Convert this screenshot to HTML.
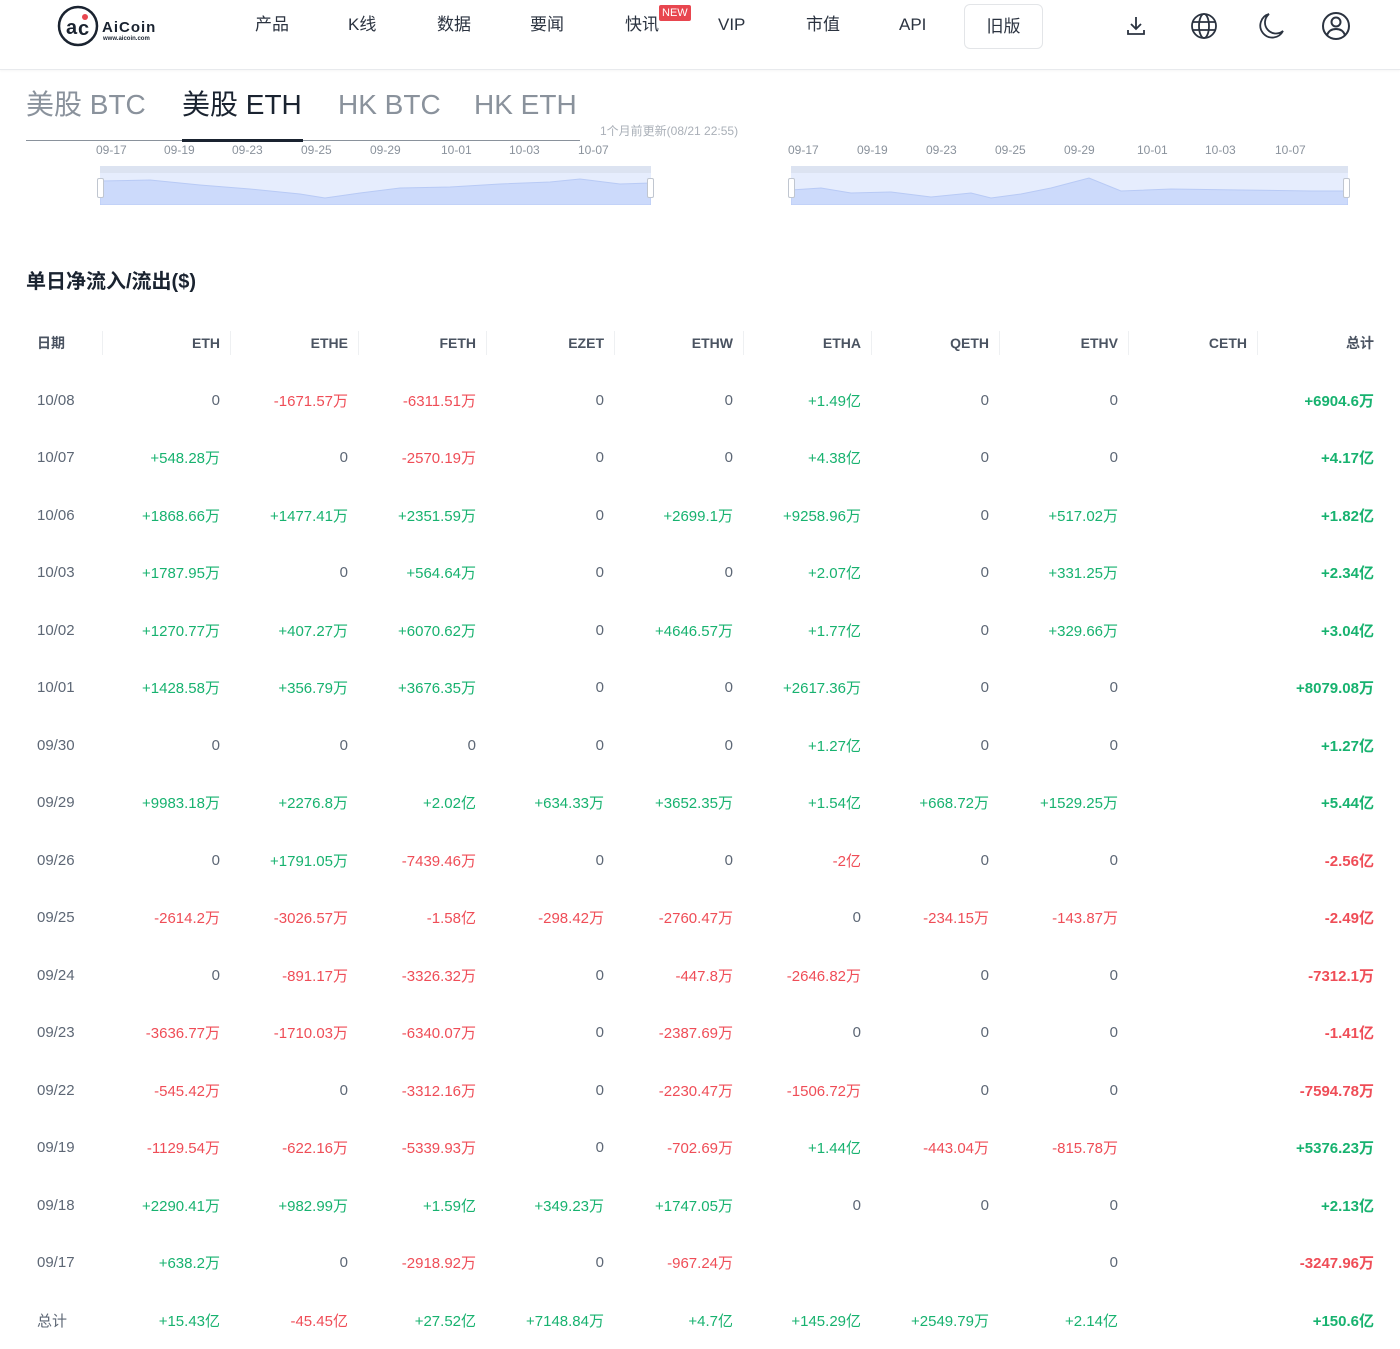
<!DOCTYPE html>
<html><head><meta charset="utf-8">
<style>
*{margin:0;padding:0;box-sizing:border-box}
body{width:1400px;height:1335px;overflow:hidden;background:#fff;font-family:"Liberation Sans","Noto Sans CJK SC",sans-serif;color:#5d6775;position:relative}
.nav{position:absolute;left:0;top:0;width:1400px;height:70px;border-bottom:1px solid #e8eaed;box-shadow:0 1px 2px rgba(0,0,0,0.04)}
.nav .it{position:absolute;top:12px;height:26px;line-height:26px;font-size:17px;color:#2b3340}
.new{position:absolute;left:659px;top:5px;background:#e8464f;color:#fff;font-size:11px;padding:1px 3px;border-radius:2px;line-height:14px}
.old{position:absolute;left:964px;top:4px;width:79px;height:45px;border:1px solid #e3e5e8;border-radius:6px;font-size:17px;color:#2b3340;text-align:center;line-height:43px}
.tab{position:absolute;top:85px;height:40px;line-height:40px;font-size:28px;color:#8a929c}
.tl{position:absolute;left:26px;top:140px;width:554px;height:1px;background:#8a929c}
.ta{position:absolute;left:182px;top:139px;width:121px;height:3px;background:#1a2330}
.dl{position:absolute;top:143px;font-size:12px;color:#8a929c}
.upd{position:absolute;left:600px;top:122px;font-size:12px;color:#aab0b8}
.ch{position:absolute;top:166px;height:39px;background:#e6edfd;border-top:7px solid #dce3f1}
.h{position:absolute;top:178px;width:7px;height:20px;background:#fff;border:1px solid #c0c6d0;border-radius:2px}
h2{position:absolute;left:26px;top:265px;font-size:20px;color:#1a2330;font-weight:bold}
table{position:absolute;left:26px;top:314px;border-collapse:collapse;table-layout:fixed;width:1358px}
td,th{height:57.5px;text-align:right;padding-right:10px;font-size:15px;font-weight:normal;white-space:nowrap}
th{font-weight:bold;font-size:14px;color:#4a5361;position:relative}
th:not(:first-child)::before{content:"";position:absolute;left:0;top:17px;height:24px;border-left:1px solid #eef0f2}
td:first-child,th:first-child{text-align:left;padding-left:11px;padding-right:0}
.g{color:#17b26f}.r{color:#ef4d57}
td:last-child{font-weight:bold}
</style></head><body>
<div class="nav">
<svg style="position:absolute;left:57px;top:5px" width="110" height="44" viewBox="0 0 110 44">
<circle cx="21" cy="21" r="19" fill="none" stroke="#1a2330" stroke-width="2.5"/>
<text x="9" y="29" font-family="Liberation Sans" font-weight="bold" font-size="20" fill="#1a2330">a</text>
<text x="21" y="30" font-family="Liberation Sans" font-weight="bold" font-size="20" fill="#1a2330">c</text>
<circle cx="28" cy="12" r="3" fill="#e8464f"/>
<text x="45" y="27" font-family="Liberation Sans" font-weight="bold" font-size="15" fill="#1a2330" letter-spacing="1">AiCoin</text>
<text x="46" y="35" font-family="Liberation Sans" font-weight="bold" font-size="6" fill="#1a2330">www.aicoin.com</text>
</svg>
<span class="it" style="left:255px">产品</span>
<span class="it" style="left:348px">K线</span>
<span class="it" style="left:437px">数据</span>
<span class="it" style="left:530px">要闻</span>
<span class="it" style="left:625px">快讯</span>
<span class="new">NEW</span>
<span class="it" style="left:718px">VIP</span>
<span class="it" style="left:806px">市值</span>
<span class="it" style="left:899px">API</span>
<div class="old">旧版</div>
<svg style="position:absolute;left:1124px;top:14px" width="24" height="24" viewBox="0 0 24 24" fill="none" stroke="#2b3340" stroke-width="1.8"><path d="M12 3v12M7 10l5 5 5-5M4 16v4h16v-4"/></svg>
<svg style="position:absolute;left:1189px;top:11px" width="30" height="30" viewBox="0 0 30 30" fill="none" stroke="#2b3340" stroke-width="1.8"><circle cx="15" cy="15" r="12"/><ellipse cx="15" cy="15" rx="5" ry="12"/><path d="M3 11h24M3 19h24"/></svg>
<svg style="position:absolute;left:1256px;top:11px" width="30" height="30" viewBox="0 0 30 30" fill="none" stroke="#2b3340" stroke-width="1.8"><path d="M13 3a12 12 0 1 0 14 17A11 11 0 0 1 13 3z"/></svg>
<svg style="position:absolute;left:1320px;top:10px" width="32" height="32" viewBox="0 0 32 32" fill="none" stroke="#2b3340" stroke-width="2"><circle cx="16" cy="16" r="13"/><circle cx="16" cy="12" r="4.5"/><path d="M7 25c2-5 6-6 9-6s7 1 9 6"/></svg>
</div>

<span class="tab" style="left:26px">美股 BTC</span>
<span class="tab" style="left:182px;color:#1a2330">美股 ETH</span>
<span class="tab" style="left:338px">HK BTC</span>
<span class="tab" style="left:474px">HK ETH</span>
<div class="tl"></div><div class="ta"></div>
<span class="upd">1个月前更新(08/21 22:55)</span>

<span class="dl" style="left:96px">09-17</span><span class="dl" style="left:164px">09-19</span><span class="dl" style="left:232px">09-23</span><span class="dl" style="left:301px">09-25</span><span class="dl" style="left:370px">09-29</span><span class="dl" style="left:441px">10-01</span><span class="dl" style="left:509px">10-03</span><span class="dl" style="left:578px">10-07</span>
<div class="ch" style="left:100px;width:551px"><svg width="551" height="32" style="position:absolute;left:0;top:0" preserveAspectRatio="none" viewBox="0 0 551 32"><path d="M0 8L50 7 100 12 150 16 200 21 225 25 260 20 300 15 350 14 400 11 450 9 480 6 520 11 551 10V32H0z" fill="#ccdafb" stroke="#b8caf5"/></svg></div>
<div class="h" style="left:97px"></div><div class="h" style="left:647px"></div>

<span class="dl" style="left:788px">09-17</span><span class="dl" style="left:857px">09-19</span><span class="dl" style="left:926px">09-23</span><span class="dl" style="left:995px">09-25</span><span class="dl" style="left:1064px">09-29</span><span class="dl" style="left:1137px">10-01</span><span class="dl" style="left:1205px">10-03</span><span class="dl" style="left:1275px">10-07</span>
<div class="ch" style="left:791px;width:557px"><svg width="557" height="32" style="position:absolute;left:0;top:0" preserveAspectRatio="none" viewBox="0 0 557 32"><path d="M0 17L30 15 60 20 100 19 140 24 180 20 200 25 230 21 260 15 298 5 330 18 380 16 450 17 520 18 557 18V32H0z" fill="#ccdafb" stroke="#b8caf5"/></svg></div>
<div class="h" style="left:788px"></div><div class="h" style="left:1343px"></div>

<h2>单日净流入/流出($)</h2>

<table>
<colgroup><col style="width:76px"><col style="width:128px"><col style="width:128px"><col style="width:128px"><col style="width:128px"><col style="width:129px"><col style="width:128px"><col style="width:128px"><col style="width:129px"><col style="width:129px"><col style="width:127px"></colgroup>
<tr><th>日期</th><th>ETH</th><th>ETHE</th><th>FETH</th><th>EZET</th><th>ETHW</th><th>ETHA</th><th>QETH</th><th>ETHV</th><th>CETH</th><th>总计</th></tr>
<tr><td>10/08</td><td>0</td><td class="r">-1671.57万</td><td class="r">-6311.51万</td><td>0</td><td>0</td><td class="g">+1.49亿</td><td>0</td><td>0</td><td></td><td class="g">+6904.6万</td></tr>
<tr><td>10/07</td><td class="g">+548.28万</td><td>0</td><td class="r">-2570.19万</td><td>0</td><td>0</td><td class="g">+4.38亿</td><td>0</td><td>0</td><td></td><td class="g">+4.17亿</td></tr>
<tr><td>10/06</td><td class="g">+1868.66万</td><td class="g">+1477.41万</td><td class="g">+2351.59万</td><td>0</td><td class="g">+2699.1万</td><td class="g">+9258.96万</td><td>0</td><td class="g">+517.02万</td><td></td><td class="g">+1.82亿</td></tr>
<tr><td>10/03</td><td class="g">+1787.95万</td><td>0</td><td class="g">+564.64万</td><td>0</td><td>0</td><td class="g">+2.07亿</td><td>0</td><td class="g">+331.25万</td><td></td><td class="g">+2.34亿</td></tr>
<tr><td>10/02</td><td class="g">+1270.77万</td><td class="g">+407.27万</td><td class="g">+6070.62万</td><td>0</td><td class="g">+4646.57万</td><td class="g">+1.77亿</td><td>0</td><td class="g">+329.66万</td><td></td><td class="g">+3.04亿</td></tr>
<tr><td>10/01</td><td class="g">+1428.58万</td><td class="g">+356.79万</td><td class="g">+3676.35万</td><td>0</td><td>0</td><td class="g">+2617.36万</td><td>0</td><td>0</td><td></td><td class="g">+8079.08万</td></tr>
<tr><td>09/30</td><td>0</td><td>0</td><td>0</td><td>0</td><td>0</td><td class="g">+1.27亿</td><td>0</td><td>0</td><td></td><td class="g">+1.27亿</td></tr>
<tr><td>09/29</td><td class="g">+9983.18万</td><td class="g">+2276.8万</td><td class="g">+2.02亿</td><td class="g">+634.33万</td><td class="g">+3652.35万</td><td class="g">+1.54亿</td><td class="g">+668.72万</td><td class="g">+1529.25万</td><td></td><td class="g">+5.44亿</td></tr>
<tr><td>09/26</td><td>0</td><td class="g">+1791.05万</td><td class="r">-7439.46万</td><td>0</td><td>0</td><td class="r">-2亿</td><td>0</td><td>0</td><td></td><td class="r">-2.56亿</td></tr>
<tr><td>09/25</td><td class="r">-2614.2万</td><td class="r">-3026.57万</td><td class="r">-1.58亿</td><td class="r">-298.42万</td><td class="r">-2760.47万</td><td>0</td><td class="r">-234.15万</td><td class="r">-143.87万</td><td></td><td class="r">-2.49亿</td></tr>
<tr><td>09/24</td><td>0</td><td class="r">-891.17万</td><td class="r">-3326.32万</td><td>0</td><td class="r">-447.8万</td><td class="r">-2646.82万</td><td>0</td><td>0</td><td></td><td class="r">-7312.1万</td></tr>
<tr><td>09/23</td><td class="r">-3636.77万</td><td class="r">-1710.03万</td><td class="r">-6340.07万</td><td>0</td><td class="r">-2387.69万</td><td>0</td><td>0</td><td>0</td><td></td><td class="r">-1.41亿</td></tr>
<tr><td>09/22</td><td class="r">-545.42万</td><td>0</td><td class="r">-3312.16万</td><td>0</td><td class="r">-2230.47万</td><td class="r">-1506.72万</td><td>0</td><td>0</td><td></td><td class="r">-7594.78万</td></tr>
<tr><td>09/19</td><td class="r">-1129.54万</td><td class="r">-622.16万</td><td class="r">-5339.93万</td><td>0</td><td class="r">-702.69万</td><td class="g">+1.44亿</td><td class="r">-443.04万</td><td class="r">-815.78万</td><td></td><td class="g">+5376.23万</td></tr>
<tr><td>09/18</td><td class="g">+2290.41万</td><td class="g">+982.99万</td><td class="g">+1.59亿</td><td class="g">+349.23万</td><td class="g">+1747.05万</td><td>0</td><td>0</td><td>0</td><td></td><td class="g">+2.13亿</td></tr>
<tr><td>09/17</td><td class="g">+638.2万</td><td>0</td><td class="r">-2918.92万</td><td>0</td><td class="r">-967.24万</td><td></td><td></td><td>0</td><td></td><td class="r">-3247.96万</td></tr>
<tr><td>总计</td><td class="g">+15.43亿</td><td class="r">-45.45亿</td><td class="g">+27.52亿</td><td class="g">+7148.84万</td><td class="g">+4.7亿</td><td class="g">+145.29亿</td><td class="g">+2549.79万</td><td class="g">+2.14亿</td><td></td><td class="g">+150.6亿</td></tr>
</table>
</body></html>
